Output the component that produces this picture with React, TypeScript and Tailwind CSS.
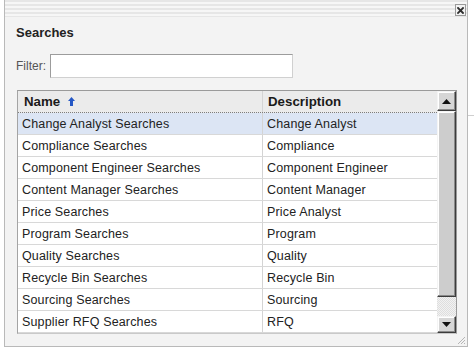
import React from "react";

const rows: [string, string][] = [
  ["Change Analyst Searches", "Change Analyst"],
  ["Compliance Searches", "Compliance"],
  ["Component Engineer Searches", "Component Engineer"],
  ["Content Manager Searches", "Content Manager"],
  ["Price Searches", "Price Analyst"],
  ["Program Searches", "Program"],
  ["Quality Searches", "Quality"],
  ["Recycle Bin Searches", "Recycle Bin"],
  ["Sourcing Searches", "Sourcing"],
  ["Supplier RFQ Searches", "RFQ"],
];

const btn3d =
  "box-border border border-t-[#f4f4f4] border-l-[#f4f4f4] border-r-[#3c3c3c] border-b-[#3c3c3c] shadow-[inset_-1px_-1px_0_#8a8a8a,inset_1px_1px_0_#ffffff]";

export default function App() {
  return (
    <div className="w-[474px] h-[351px] bg-white flex overflow-hidden font-['Liberation_Sans',Arial,sans-serif]">
      <div className="ml-[4px] w-[464px] h-[347px] shrink-0 box-border bg-[#f3f3f3] border-x border-b border-[#b9b9b9] flex flex-col relative">
        {/* striped title bar */}
        <div className="h-[17px] shrink-0 flex justify-end items-start pr-[1px] pt-[4px] bg-[repeating-linear-gradient(to_bottom,#e6e6e6_0px,#e6e6e6_2px,#f6f6f6_2px,#f6f6f6_4px)]">
          <div className="w-[11px] h-[12px] box-border border border-[#9a9a9a] bg-[#f2f2f2] flex items-center justify-center">
            <svg width="7" height="7" viewBox="0 0 7 7">
              <path d="M1 1 L6 6 M6 1 L1 6" stroke="#2e2e2e" strokeWidth="1.8" strokeLinecap="square" />
            </svg>
          </div>
        </div>

        {/* title */}
        <div className="mt-[8px] pl-[11px] text-[13px] leading-[16px] font-bold text-[#222]">Searches</div>

        {/* filter */}
        <div className="mt-[13px] pl-[11px] flex items-center h-[24px]">
          <span className="w-[34px] text-[12px] text-[#555]">Filter:</span>
          <div className="w-[243px] h-[24px] box-border bg-white border border-t-[#9c9c9c] border-l-[#9c9c9c] border-r-[#d0d0d0] border-b-[#d0d0d0]" />
        </div>

        {/* table */}
        <div className="mt-[12px] ml-[12px] w-[440px] h-[244px] box-border border border-t-[#9a9a9a] border-l-[#a4a4a4] border-r-[#9a9a9a] border-b-[#c9c9c9] bg-white flex">
          <div className="w-[419px] flex flex-col">
            <div className="h-[22px] box-border flex bg-[#ebebeb] border-b border-dotted border-[#7d7d7d] text-[13.3px] font-bold text-[#1a1a1a]">
              <div className="w-[245px] box-border border-r border-[#d4d4d4] pl-[6px] flex items-center">
                <span>Name</span>
                <svg className="ml-[8px]" width="7" height="9" viewBox="0 0 7 9">
                  <polygon points="3.5,0 7,4 5,4 5,9 2,9 2,4 0,4" fill="#2457c5" />
                </svg>
              </div>
              <div className="flex-1 pl-[5px] flex items-center">Description</div>
            </div>
            {rows.map(([n, d], i) => (
              <div
                key={n}
                className={
                  i === 0
                    ? "h-[22px] box-border flex border-b border-[#d8d8d8] bg-[#dce5f4] text-[12.5px] tracking-[0.15px] text-[#222]"
                    : "h-[22px] box-border flex border-b border-[#d8d8d8] text-[12.5px] tracking-[0.15px] text-[#222]"
                }
              >
                <div className="w-[245px] box-border border-r border-[#d4d4d4] pl-[4px] pt-[2px] flex items-center">{n}</div>
                <div className="flex-1 pl-[4px] pt-[2px] flex items-center">{d}</div>
              </div>
            ))}
          </div>

          {/* scrollbar */}
          <div className="w-[19px] flex flex-col bg-[#e8e8e8]">
            <div className={`h-[20px] bg-[#d6d6d6] flex items-center justify-center ${btn3d}`}>
              <svg width="9" height="5" viewBox="0 0 9 5">
                <polygon points="4.5,0 9,5 0,5" fill="#111" />
              </svg>
            </div>
            <div className={`h-[186px] bg-[#cdcdcd] ${btn3d}`} />
            <div className="h-[19px] bg-[repeating-conic-gradient(#f2f2f2_0%_25%,#dedede_0%_50%)] bg-[length:2px_2px]" />
            <div className={`h-[17px] bg-[#d6d6d6] flex items-center justify-center ${btn3d}`}>
              <svg width="9" height="5" viewBox="0 0 9 5">
                <polygon points="0,0 9,0 4.5,5" fill="#111" />
              </svg>
            </div>
          </div>
        </div>

        {/* resize grip */}
        <svg className="absolute right-[1px] bottom-[1px]" width="9" height="9" viewBox="0 0 9 9">
          <path d="M8 1 L1 8 M8 4 L4 8 M8 7 L7 8" stroke="#b5b5b5" strokeWidth="1" />
        </svg>
      </div>

      {/* page behind */}
      <div className="flex-1 flex flex-col">
        <div className="mt-[115px] h-px bg-[#cfcfcf]" />
      </div>
    </div>
  );
}
